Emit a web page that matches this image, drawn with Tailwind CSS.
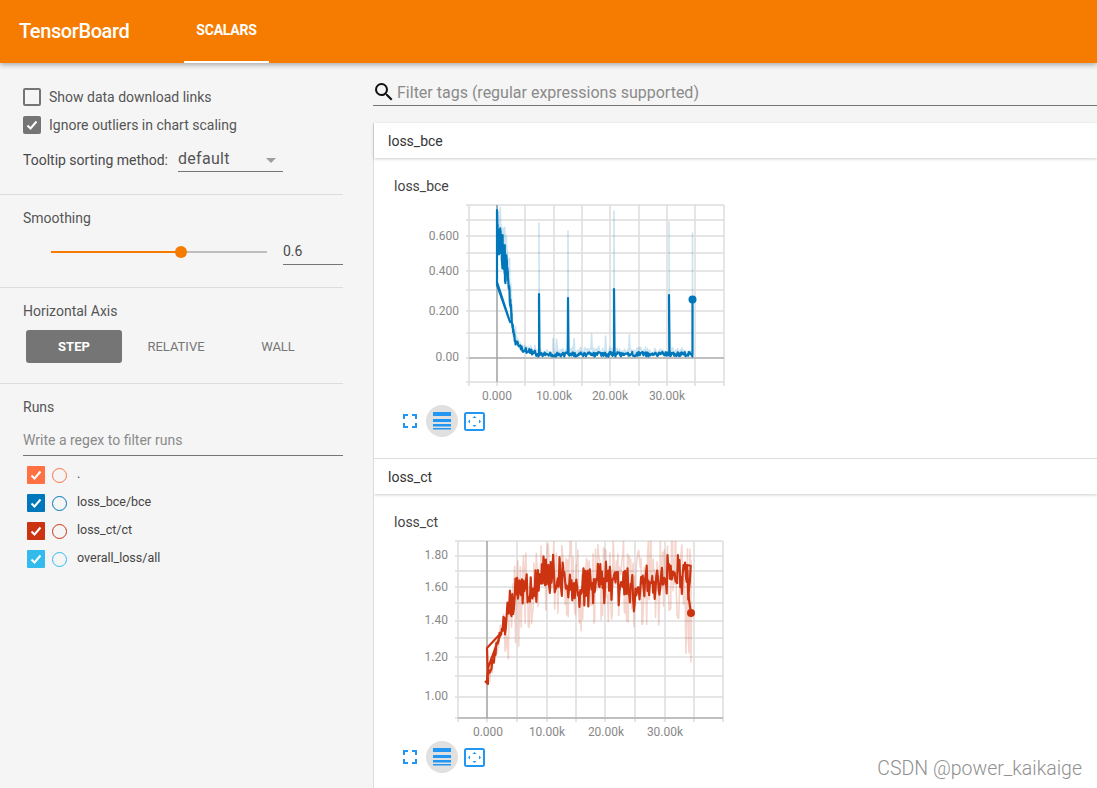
<!DOCTYPE html>
<html lang="en">
<head>
    <meta charset="UTF-8">
    <meta name="viewport" content="width=device-width, initial-scale=1.0">
    <script src="https://cdn.jsdelivr.net/npm/@tailwindcss/browser@4"></script>
    <title>TensorBoard</title>
</head>
<body class="bg-[#f5f5f5] font-['Roboto',sans-serif] overflow-hidden h-[788px] relative">
    <!-- Header -->
    <header class="relative z-10 h-[63px] bg-[#f57c00] flex items-stretch shadow-[0_2px_5px_rgba(0,0,0,0.3)]">
        <h1 class="w-[184px] pl-[19px] text-white font-medium text-[20px] leading-[62px] tracking-[-0.4px]">TensorBoard</h1>
        <div class="w-[85px] border-b-2 border-white text-white font-bold text-[14px] text-center leading-[61px] tracking-[-0.2px]">SCALARS</div>
    </header>

    <div class="flex h-[725px]">
        <!-- Sidebar -->
        <aside class="w-[373px] shrink-0 text-[14px] text-[#555]">
            <section class="w-[343px] h-[132px] border-b border-[#dcdcdc] pl-[23px] pt-[25px]">
                <div class="flex items-center h-[18px] gap-2">
                    <span class="w-[18px] h-[18px] border-2 border-[#757575] rounded-[2px]"></span>
                    <span>Show data download links</span>
                </div>
                <div class="flex items-center h-[18px] gap-2 mt-[10px]">
                    <span class="w-[18px] h-[18px] bg-[#757575] rounded-[2px] flex items-center justify-center">
                        <svg width="14" height="14" viewBox="0 0 14 14"><path d="M2.5 7.5l3 3 6-7" fill="none" stroke="#fff" stroke-width="2"/></svg>
                    </span>
                    <span>Ignore outliers in chart scaling</span>
                </div>
                <div class="flex items-start mt-[14px]">
                    <span class="w-[155px] pt-[3px] leading-[18px] text-[#4a4a4a]">Tooltip sorting method:</span>
                    <div class="w-[105px] h-[24px] border-b border-[#757575] flex items-start justify-between pr-[7px] text-[16px] leading-[22px] tracking-[0.3px]">
                        <span>default</span>
                        <span class="mt-[10px] w-0 h-0 border-x-[5px] border-x-transparent border-t-[5px] border-t-[#9e9e9e]"></span>
                    </div>
                </div>
            </section>

            <section class="w-[343px] h-[93px] border-b border-[#dcdcdc] pl-[23px] pt-[14px]">
                <div class="leading-[18px]">Smoothing</div>
                <div class="flex items-start mt-[11px]">
                    <div class="relative ml-[28px] w-[216px] h-[18px] mt-[5px]">
                        <div class="absolute top-[8px] left-0 right-0 h-[2px] bg-[#bdbdbd]"></div>
                        <div class="absolute top-[8px] left-0 w-[130px] h-[2px] bg-[#f57c00]"></div>
                        <div class="absolute top-[3px] left-[124px] w-[12px] h-[12px] rounded-full bg-[#f57c00]"></div>
                    </div>
                    <div class="ml-[16px] w-[60px] h-[27px] pt-[4px] border-b border-[#757575] leading-[18px] text-[#4a4a4a]">0.6</div>
                </div>
            </section>

            <section class="w-[343px] h-[96px] border-b border-[#dcdcdc] pl-[23px] pt-[14px]">
                <div class="leading-[18px]">Horizontal Axis</div>
                <div class="flex items-center mt-[10px] ml-[3px] text-[13px] text-[#757575]">
                    <div class="w-[96px] h-[33px] bg-[#757575] rounded-[3px] text-white font-bold text-center leading-[34px]">STEP</div>
                    <div class="w-[108px] text-center">RELATIVE</div>
                    <div class="w-[96px] text-center">WALL</div>
                </div>
            </section>

            <section class="pt-[14px]">
                <div class="pl-[23px] leading-[18px]">Runs</div>
                <div class="ml-[23px] w-[320px] h-[30px] mt-[10px] border-b border-[#757575] leading-[28px] text-[#8a8a8a]">Write a regex to filter runs</div>
                <ul class="pl-[27px] pt-[10px] text-[12.5px] text-[#444]">
                    <li class="flex items-center h-[18px]">
                        <span class="w-[18px] h-[18px] bg-[#ff7043] flex items-center justify-center rounded-[1px]"><svg width="14" height="14" viewBox="0 0 14 14"><path d="M2.5 7.5l3 3 6-7" fill="none" stroke="#fff" stroke-width="2"/></svg></span>
                        <span class="ml-[7px] shrink-0 w-[15px] h-[15px] rounded-full border-[1.5px] border-[#ff7043]"></span>
                        <span class="ml-[10px] -mt-[2px]">.</span>
                    </li>
                    <li class="flex items-center h-[18px] mt-[10px]">
                        <span class="w-[18px] h-[18px] bg-[#0077bb] flex items-center justify-center rounded-[1px]"><svg width="14" height="14" viewBox="0 0 14 14"><path d="M2.5 7.5l3 3 6-7" fill="none" stroke="#fff" stroke-width="2"/></svg></span>
                        <span class="ml-[7px] shrink-0 w-[15px] h-[15px] rounded-full border-[1.5px] border-[#0077bb]"></span>
                        <span class="ml-[10px] -mt-[2px]">loss_bce/bce</span>
                    </li>
                    <li class="flex items-center h-[18px] mt-[10px]">
                        <span class="w-[18px] h-[18px] bg-[#cc3311] flex items-center justify-center rounded-[1px]"><svg width="14" height="14" viewBox="0 0 14 14"><path d="M2.5 7.5l3 3 6-7" fill="none" stroke="#fff" stroke-width="2"/></svg></span>
                        <span class="ml-[7px] shrink-0 w-[15px] h-[15px] rounded-full border-[1.5px] border-[#cc3311]"></span>
                        <span class="ml-[10px] -mt-[2px]">loss_ct/ct</span>
                    </li>
                    <li class="flex items-center h-[18px] mt-[10px]">
                        <span class="w-[18px] h-[18px] bg-[#33bbee] flex items-center justify-center rounded-[1px]"><svg width="14" height="14" viewBox="0 0 14 14"><path d="M2.5 7.5l3 3 6-7" fill="none" stroke="#fff" stroke-width="2"/></svg></span>
                        <span class="ml-[7px] shrink-0 w-[15px] h-[15px] rounded-full border-[1.5px] border-[#33bbee]"></span>
                        <span class="ml-[10px] -mt-[2px]">overall_loss/all</span>
                    </li>
                </ul>
            </section>
        </aside>

        <!-- Main -->
        <main class="flex-1 min-w-0">
            <div class="h-[43px] border-b border-[#757575] flex items-end pb-[1px] text-[16px] text-[#8a8a8a] leading-[22px]">
                <svg class="ml-[2px] mr-[4px] mb-[3px]" width="18" height="18" viewBox="3 3 18 18"><path d="M15.5 14h-.79l-.28-.27A6.47 6.47 0 0 0 16 9.5 6.5 6.5 0 1 0 9.5 16c1.61 0 3.09-.59 4.23-1.57l.27.28v.79l5 4.99L20.49 19l-4.99-5zm-6 0C7.01 14 5 11.99 5 9.5S7.01 5 9.5 5 14 7.01 14 9.5 11.99 14 9.5 14z" fill="#111"/></svg>
                <span>Filter tags (regular expressions supported)</span>
            </div>

            <section class="mt-[17px] h-[336px] bg-white border-l border-[#dcdcdc] border-b">
                <div class="h-[35px] pl-[14px] pt-[1px] text-[14px] leading-[35px] text-[#333] shadow-[0_1px_3px_rgba(0,0,0,0.2)]">loss_bce</div>
                <div class="pl-[20px] pt-[19px] text-[14px] leading-[18px] text-[#444]">loss_bce</div>
                <svg id="chart1" class="block ml-[6px]" width="350" height="210" viewBox="380 195 350 210"></svg>
                <div class="flex items-center ml-[29px] h-[32px]">
                    <svg width="14" height="14" viewBox="0 0 14 14"><path d="M1 5V1h4M9 1h4v4M13 9v4H9M5 13H1V9" fill="none" stroke="#2196f3" stroke-width="2"/></svg>
                    <div class="ml-[9px] w-[32px] h-[32px] rounded-full bg-[#e0e0e0] flex items-center justify-center">
                        <svg width="18" height="18" viewBox="0 0 18 18"><path d="M0 0h18v4H0zM0 7h18v3H0zM0 12h18v2.5H0zM0 16h18v1.5H0z" fill="#2196f3"/></svg>
                    </div>
                    <svg class="ml-[6px]" width="21" height="19" viewBox="0 0 21 19"><rect x="1" y="1" width="19" height="17" rx="1.5" fill="none" stroke="#2196f3" stroke-width="2"/><path d="M10.5 4l2 2h-4zM10.5 15l2-2h-4zM4 9.5l2-2v4zM17 9.5l-2-2v4z" fill="#2196f3"/></svg>
                </div>
            </section>

            <section class="h-[329px] overflow-hidden bg-white border-l border-[#dcdcdc]">
                <div class="h-[35px] pl-[14px] pt-[1px] text-[14px] leading-[35px] text-[#333] shadow-[0_1px_3px_rgba(0,0,0,0.2)]">loss_ct</div>
                <div class="pl-[20px] pt-[19px] text-[14px] leading-[18px] text-[#444]">loss_ct</div>
                <svg id="chart2" class="block ml-[6px]" width="350" height="210" viewBox="380 531 350 210"></svg>
                <div class="flex items-center ml-[29px] h-[32px]">
                    <svg width="14" height="14" viewBox="0 0 14 14"><path d="M1 5V1h4M9 1h4v4M13 9v4H9M5 13H1V9" fill="none" stroke="#2196f3" stroke-width="2"/></svg>
                    <div class="ml-[9px] w-[32px] h-[32px] rounded-full bg-[#e0e0e0] flex items-center justify-center">
                        <svg width="18" height="18" viewBox="0 0 18 18"><path d="M0 0h18v4H0zM0 7h18v3H0zM0 12h18v2.5H0zM0 16h18v1.5H0z" fill="#2196f3"/></svg>
                    </div>
                    <svg class="ml-[6px]" width="21" height="19" viewBox="0 0 21 19"><rect x="1" y="1" width="19" height="17" rx="1.5" fill="none" stroke="#2196f3" stroke-width="2"/><path d="M10.5 4l2 2h-4zM10.5 15l2-2h-4zM4 9.5l2-2v4zM17 9.5l-2-2v4z" fill="#2196f3"/></svg>
                </div>
            </section>
        </main>
    </div>

    <div class="absolute right-[15px] top-[758px] text-[19.5px] leading-[22px] font-light text-[#909090]">CSDN @power_kaikaige</div>

    <script>
        // seeded noise so the curves stay the same between runs
        function rng(seed) {
            return function() {
                seed = (seed * 1664525 + 1013904223) % 4294967296;
                return seed / 4294967296;
            };
        }

        function toPath(points) {
            return points.map(function(p, i) { return (i ? 'L' : 'M') + p[0].toFixed(1) + ' ' + p[1].toFixed(1); }).join('');
        }

        function drawChart(id, c, light, dark, color) {
            var s = '';
            var left = c.vx[0], right = c.vx[c.vx.length - 1], top = c.hy[0], bottom = c.hy[c.hy.length - 1];
            c.hy.forEach(function(y) { s += '<line x1="' + (left - 3) + '" x2="' + right + '" y1="' + y + '" y2="' + y + '" stroke="#ddd" stroke-width="1.5"/>'; });
            c.vx.forEach(function(x) { s += '<line x1="' + x + '" x2="' + x + '" y1="' + top + '" y2="' + (bottom + 4) + '" stroke="#ddd" stroke-width="1.5"/>'; });
            s += '<line x1="' + left + '" x2="' + right + '" y1="' + c.zeroY + '" y2="' + c.zeroY + '" stroke="#999" stroke-width="1.2"/>';
            s += '<line x1="' + c.zeroX + '" x2="' + c.zeroX + '" y1="' + top + '" y2="' + bottom + '" stroke="#999" stroke-width="1.2"/>';
            s += '<clipPath id="' + id + 'clip"><rect x="' + left + '" y="' + top + '" width="' + (right - left) + '" height="' + (bottom - top) + '"/></clipPath>';
            s += '<g clip-path="url(#' + id + 'clip)" fill="none" stroke-linejoin="round">';
            s += '<path d="' + toPath(light) + '" stroke="' + color + '" stroke-opacity="0.2" stroke-width="1.6"/>';
            s += '<path d="' + toPath(dark) + '" stroke="' + color + '" stroke-width="2.2"/>';
            s += '</g>';
            var last = dark[dark.length - 1];
            s += '<circle cx="' + last[0] + '" cy="' + last[1] + '" r="4" fill="' + color + '"/>';
            c.yLabels.forEach(function(l) {
                s += '<text x="' + c.yLabelX + '" y="' + (l[1] + 4) + '" text-anchor="end" font-size="12" fill="#888" font-family="Roboto">' + l[0] + '</text>';
            });
            c.xLabels.forEach(function(l) {
                s += '<text x="' + l[1] + '" y="' + c.xLabelY + '" text-anchor="middle" font-size="12" fill="#888" font-family="Roboto">' + l[0] + '</text>';
            });
            document.getElementById(id).innerHTML = s;
        }

        function bceSeries() {
            var r = rng(7), dark = [[497, 282], [510, 322], [497, 285], [497, 210]], light = [[497, 250]];
            var spikes = { 539: [294, 223], 568: [298, 231], 614: [289, 211], 669: [295, 222] };
            for (var x = 497.2; x < 693; x += (x < 516 ? 0.2 : 0.7)) {
                var base, k = Math.round(x);
                if (x < 507) base = 208 + (x - 497) * 4.5 + r() * 38;
                else if (x < 512) base = 262 + (x - 507) * 11 + r() * 9;
                else if (x < 515) base = 320 + (x - 512) * 6 + r() * 5;
                else if (x < 523) base = 339 + (x - 515) * 1 + r() * 5;
                else if (x < 537) base = 347 + (x - 523) * 0.3 + r() * 5;
                else base = 352 + r() * 4.5;
                dark.push([x, base]);
                light.push([x, base - r() * (x < 512 ? 24 : 6) - (r() < 0.05 ? 14 : 0)]);
                if (spikes[k] && Math.abs(x - k) < 0.36) {
                    dark.push([k, spikes[k][0]], [k + 0.5, 352]);
                    light.push([k, spikes[k][1]], [k + 0.5, 352]);
                }
            }
            dark.push([692.5, 352], [692.5, 299.5]);
            light.push([692.5, 233], [692.5, 352]);
            return { light: light, dark: dark };
        }

        function ctSeries() {
            var r = rng(31), dark = [[485, 681], [488, 684], [487, 648], [501, 633], [488, 668], [487, 681]], light = [[487, 680]];
            for (var x = 487.5; x < 691; x += 0.8) {
                var mean;
                if (x < 500) mean = 680 - (x - 487) * 3.4;
                else if (x < 507) mean = 636 - (x - 500) * 3.7;
                else if (x < 520) mean = 610 - (x - 507) * 1.5;
                else if (x < 535) mean = 590;
                else if (x < 542) mean = 590 - (x - 535) * 2.2;
                else mean = 583 + Math.sin(x / 9) * 5 + Math.sin(x / 23) * 4;
                var spread = x < 505 ? 10 : 24;
                var y = mean + (r() - 0.5) * spread + (r() - 0.5) * spread;
                dark.push([x, y]);
                var far = x < 505 ? 12 : (r() < 0.12 ? 85 : 40);
                light.push([x, mean + (r() - 0.5) * far * 2]);
            }
            light.push([691, 560], [691, 662], [691.5, 613]);
            dark.push([687, 565], [689, 600], [691, 613]);
            return { light: light, dark: dark };
        }

        var bce = bceSeries();
        drawChart('chart1', {
            vx: [469, 497, 525, 554, 582, 610, 639, 667, 695, 724],
            hy: [205, 220, 236, 253, 271, 290, 311, 333, 358, 382],
            zeroX: 497, zeroY: 358, yLabelX: 459, xLabelY: 400,
            yLabels: [['0.600', 236], ['0.400', 271], ['0.200', 311], ['0.00', 357]],
            xLabels: [['0.000', 497], ['10.00k', 554], ['20.00k', 610], ['30.00k', 667]]
        }, bce.light, bce.dark, '#0077bb');

        var ct = ctSeries();
        drawChart('chart2', {
            vx: [458, 487, 517, 547, 576, 605, 635, 665, 694, 723],
            hy: [541, 556, 571, 587, 603, 621, 638, 657, 676, 697, 718],
            zeroX: 487, zeroY: 718, yLabelX: 448, xLabelY: 736,
            yLabels: [['1.80', 555], ['1.60', 587], ['1.40', 620], ['1.20', 657], ['1.00', 696]],
            xLabels: [['0.000', 488], ['10.00k', 547], ['20.00k', 606], ['30.00k', 665]]
        }, ct.light, ct.dark, '#cc3311');
    </script>
</body>
</html>
